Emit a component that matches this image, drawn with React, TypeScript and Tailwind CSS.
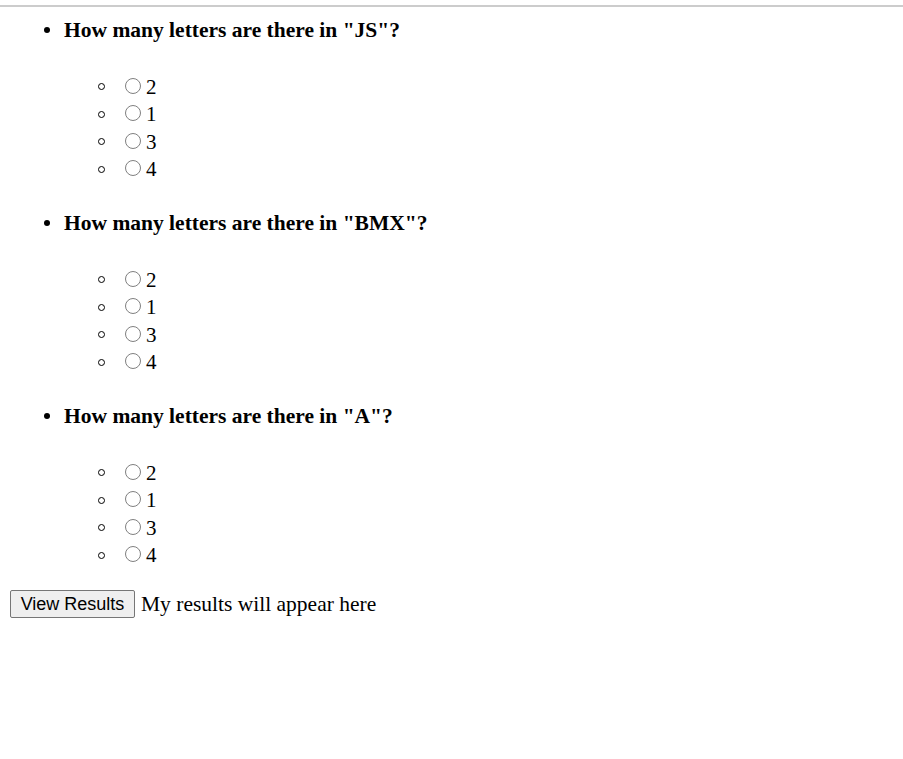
import React from "react";

const questions = [
  { q: 'How many letters are there in "JS"?', opts: ["2", "1", "3", "4"] },
  { q: 'How many letters are there in "BMX"?', opts: ["2", "1", "3", "4"] },
  { q: 'How many letters are there in "A"?', opts: ["2", "1", "3", "4"] },
];

export default function App() {
  return (
    <div className="w-[903px] h-[759px] bg-white text-black overflow-hidden" style={{ fontFamily: '"Liberation Serif", "Times New Roman", serif' }}>
      <div className="h-[5px]" />
      <div className="h-[2px] bg-[#cccccc]" />
      <div className="h-[11px]" />
      <div className="flex flex-col">
        {questions.map((item, i) => (
          <div key={i} className="flex flex-col pb-[28px]">
            <div className="flex items-center h-[24px]">
              <span className="ml-[44px] w-[6px] h-[6px] rounded-full bg-black" />
              <span className="ml-[14px] text-[21.5px] font-bold leading-[24px]">{item.q}</span>
            </div>
            <div className="h-[31px]" />
            {item.opts.map((o, j) => (
              <div key={j} className="flex items-center h-[27.5px]">
                <span className="ml-[98px] w-[7px] h-[7px] rounded-full border border-black" />
                <span className="ml-[20px] w-[16px] h-[16px] rounded-full border border-[#808080] bg-white -mt-[2px]" />
                <span className="ml-[5px] text-[21px] leading-[24px]">{o}</span>
              </div>
            ))}
          </div>
        ))}
      </div>
      <div className="flex items-center -mt-[7px] ml-[10px]">
        <button
          className="h-[28px] w-[125px] border border-[#767676] bg-[#efefef] rounded-[2px] text-[18px] text-black leading-none"
          style={{ fontFamily: '"Liberation Sans", Arial, sans-serif' }}
        >
          View Results
        </button>
        <span className="ml-[6px] text-[21.5px] leading-[24px]">My results will appear here</span>
      </div>
    </div>
  );
}
